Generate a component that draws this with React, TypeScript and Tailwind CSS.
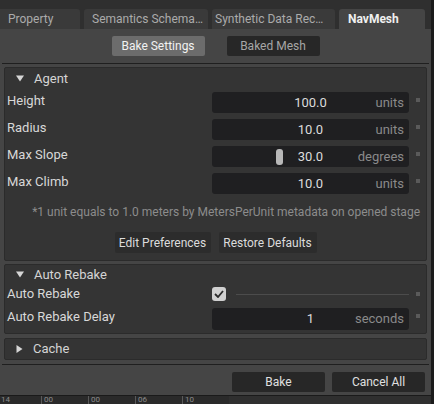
import React from "react";

const font = { fontFamily: "Roboto, 'Liberation Sans', sans-serif" };

function Tri({ open }: { open: boolean }) {
  return open ? (
    <svg width="8" height="7" viewBox="0 0 8 7" className="shrink-0">
      <path d="M0 0.5 L8 0.5 L4 6.5 Z" fill="#d6d6d6" />
    </svg>
  ) : (
    <svg width="7" height="8" viewBox="0 0 7 8" className="shrink-0">
      <path d="M0.5 0 L6.5 4 L0.5 8 Z" fill="#d6d6d6" />
    </svg>
  );
}

function Header({ title, open }: { title: string; open: boolean }) {
  return (
    <div className="flex items-center gap-[10px] pl-[11px] text-[13px] text-[#d4d4d4] h-full">
      <Tri open={open} />
      <span>{title}</span>
    </div>
  );
}

function Dot() {
  return <div className="w-[4px] h-[4px] bg-[#5a5a5a] ml-[7px] mr-[6px] -mt-[6px] shrink-0" />;
}

function FieldRow({
  label,
  value,
  unit,
  thumb,
}: {
  label: string;
  value: string;
  unit: string;
  thumb?: boolean;
}) {
  return (
    <div className="flex items-center h-[27px]">
      <div className="flex-1 pl-[2px] text-[13px] text-[#d8d8d8] -mt-[4px]">{label}</div>
      <div className="relative w-[197px] h-[21px] rounded-[3px] bg-[#1f1f21] flex items-center">
        {thumb && (
          <div className="absolute left-[64px] top-[3px] w-[7px] h-[16px] rounded-[3px] bg-[#b8b8b8]" />
        )}
        <span className="absolute left-0 right-0 text-center text-[13px] text-[#dcdcdc]">{value}</span>
        <span className="absolute right-[5px] text-[13px] text-[#8a8a8a]">{unit}</span>
      </div>
      <Dot />
    </div>
  );
}

export default function App() {
  return (
    <div className="w-[434px] h-[404px] bg-[#454545] flex overflow-hidden" style={font}>
      <div className="flex-1 flex flex-col">
        {/* tabs */}
        <div className="h-[29px] bg-[#2f2f2f] flex items-end gap-[4px] text-[12px] shrink-0">
          <div className="w-[80px] h-[20px] bg-[#3a3a3a] rounded-tr-[3px] flex items-center pl-[8px] text-[#ababab]">
            Property
          </div>
          <div className="w-[124px] h-[20px] bg-[#3a3a3a] rounded-t-[3px] flex items-center pl-[8px] text-[#ababab]">
            Semantics Schema…
          </div>
          <div className="w-[123px] h-[20px] bg-[#3a3a3a] rounded-t-[3px] flex items-center pl-[3px] text-[#ababab]">
            Synthetic Data Rec…
          </div>
          <div className="w-[86px] h-[20px] bg-[#454545] rounded-t-[3px] flex items-center pl-[9px] text-[#f0f0f0] font-bold">
            NavMesh
          </div>
        </div>

        {/* toggle */}
        <div className="flex justify-center gap-[22px] pt-[7px] shrink-0">
          <div className="w-[93px] h-[20px] bg-[#6c6c6c] rounded-[2px] flex items-center justify-center text-[12px] text-[#f2f2f2]">
            Bake Settings
          </div>
          <div className="w-[93px] h-[20px] bg-[#272727] rounded-[2px] flex items-center justify-center text-[12px] text-[#a6a6a6]">
            Baked Mesh
          </div>
        </div>
        <div className="h-[1px] bg-[#1f1f1f] mx-[2px] mt-[7px] shrink-0" />

        {/* Agent */}
        <div className="mx-[4px] mt-[3px] bg-[#343434] border border-[#2b2b2b] rounded-[2px] pb-[7px] shrink-0">
          <div className="h-[21px]">
            <Header title="Agent" open />
          </div>
          <FieldRow label="Height" value="100.0" unit="units" />
          <FieldRow label="Radius" value="10.0" unit="units" />
          <FieldRow label="Max Slope" value="30.0" unit="degrees" thumb />
          <FieldRow label="Max Climb" value="10.0" unit="units" />
          <div className="mt-[7px] pr-[6px] text-right text-[12px] leading-[16px] text-[#8c8c8c]">
            *1 unit equals to 1.0 meters by MetersPerUnit metadata on opened stage
          </div>
          <div className="flex justify-center gap-[8px] mt-[12px]">
            <div className="w-[96px] h-[21px] bg-[#2c2c2c] rounded-[2px] flex items-center justify-center text-[12px] text-[#dcdcdc]">
              Edit Preferences
            </div>
            <div className="w-[98px] h-[21px] bg-[#2c2c2c] rounded-[2px] flex items-center justify-center text-[12px] text-[#dcdcdc]">
              Restore Defaults
            </div>
          </div>
        </div>

        {/* Auto Rebake */}
        <div className="mx-[4px] mt-[3px] bg-[#343434] border border-[#2b2b2b] rounded-[2px] pb-[2px] shrink-0">
          <div className="h-[19px]">
            <Header title="Auto Rebake" open />
          </div>
          <div className="flex items-center h-[20px]">
            <div className="flex-1 pl-[2px] text-[13px] text-[#d8d8d8]">Auto Rebake</div>
            <div className="w-[197px] flex items-center">
              <div className="w-[14px] h-[14px] rounded-[3px] bg-[#d0d0d0] flex items-center justify-center">
                <svg width="10" height="8" viewBox="0 0 10 8">
                  <path d="M1 4 L4 7 L9 1" stroke="#2a2a2a" strokeWidth="1.8" fill="none" />
                </svg>
              </div>
              <div className="flex-1 h-[1px] bg-[#4c4c4c] ml-[10px]" />
            </div>
            <div className="w-[4px] h-[4px] bg-[#5a5a5a] ml-[7px] mr-[6px] shrink-0" />
          </div>
          <div className="flex items-center h-[27px] pt-[2px]">
            <div className="flex-1 pl-[2px] text-[13px] text-[#d8d8d8] -mt-[4px]">Auto Rebake Delay</div>
            <div className="relative w-[197px] h-[22px] rounded-[3px] bg-[#1f1f21] flex items-center">
              <span className="absolute left-0 right-0 text-center text-[13px] text-[#dcdcdc]">1</span>
              <span className="absolute right-[5px] text-[13px] text-[#8a8a8a]">seconds</span>
            </div>
            <Dot />
          </div>
        </div>

        {/* Cache */}
        <div className="mx-[4px] mt-[4px] h-[22px] bg-[#343434] border border-[#2b2b2b] rounded-[2px] shrink-0">
          <Header title="Cache" open={false} />
        </div>
        <div className="h-[1px] bg-[#1f1f1f] mx-[2px] mt-[4px] shrink-0" />

        {/* footer buttons */}
        <div className="flex justify-end gap-[7px] pr-[6px] pt-[7px] shrink-0">
          <div className="w-[93px] h-[20px] bg-[#272727] rounded-[2px] flex items-center justify-center text-[12px] text-[#e0e0e0]">
            Bake
          </div>
          <div className="w-[93px] h-[20px] bg-[#272727] rounded-[2px] flex items-center justify-center text-[12px] text-[#e0e0e0]">
            Cancel All
          </div>
        </div>

        {/* ruler */}
        <div className="mt-[3px] flex-1 bg-[#2a2a2a] border-t border-[#1a1a1a] flex overflow-hidden text-[8px] text-[#8a8a8a] leading-[8px]">
          <div className="w-[41px] pl-[1px]">14</div>
          <div className="w-[47px] border-l border-[#5a5a5a] pl-[2px]">00</div>
          <div className="w-[47px] border-l border-[#5a5a5a] pl-[2px]">00</div>
          <div className="w-[47px] border-l border-[#5a5a5a] pl-[2px]">06</div>
          <div className="w-[47px] border-l border-[#5a5a5a] pl-[2px]">10</div>
          <div className="flex-1 bg-[#2f2f2f]" />
        </div>
      </div>
      <div className="w-[3px] bg-[#1b1b1b]" />
    </div>
  );
}
